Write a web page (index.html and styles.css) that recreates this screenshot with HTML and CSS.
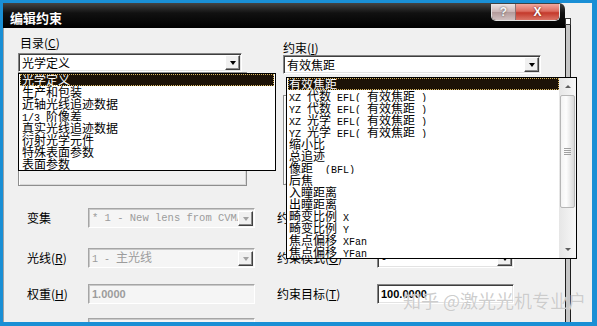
FILE: index.html
```html
<!DOCTYPE html>
<html lang="zh-CN">
<head>
  <meta charset="UTF-8">
  <title>编辑约束</title>
  <link rel="stylesheet" href="styles.css">
</head>
<body>
  <div class="window">

    <div class="dialog">
      <!-- Caption -->
      <div class="titlebar">
        <span class="title">编辑约束</span>
        <div class="caption-btns">
          <span class="cap-help">?</span>
          <span class="cap-close">X</span>
        </div>
      </div>

      <div class="content">
        <!-- Category / constraint pickers -->
        <div class="pickers">
          <div class="col-left">
            <div class="lbl">目录(<u>C</u>)</div>
            <div class="select cat"><span class="val">光学定义</span><span class="drop"></span></div>
            <div class="listbox cat-box"></div>
          </div>
          <div class="col-right">
            <div class="lbl">约束(<u>I</u>)</div>
            <div class="select con"><span class="val">有效焦距</span><span class="drop"></span></div>
            <div class="listbox con-box"></div>
          </div>
        </div>

        <!-- Field rows -->
        <div class="row r1">
          <span class="row-lbl">变集</span>
          <div class="select off field"><span class="val en wide">* 1 - New lens from CVMA</span><span class="drop"></span></div>
          <span class="row-lbl r">约束类型(<u>Y</u>)</span>
          <div class="select field r"><span class="val">-</span><span class="drop"></span></div>
        </div>
        <div class="row r2">
          <span class="row-lbl">光线(<u>R</u>)</span>
          <div class="select off field"><span class="val"><span class="en">1 - </span>主光线</span><span class="drop"></span></div>
          <span class="row-lbl r">约束模式(<u>O</u>)</span>
          <div class="select field r"><span class="val"><span class="en">-</span></span><span class="drop"></span></div>
        </div>
        <div class="row r3">
          <span class="row-lbl">权重(<u>H</u>)</span>
          <div class="input off field">1.0000</div>
          <span class="row-lbl r">约束目标(<u>T</u>)</span>
          <div class="input field r">100.0000</div>
        </div>
        <div class="row r4">
          <span class="row-lbl">变量</span>
          <div class="input off field"></div>
        </div>
      </div>
    </div>

    <!-- window behind the dialog -->
    <div class="side">
      <div class="knob"></div>
      <div class="rail"></div>
    </div>

    <!-- Open dropdown of 目录 -->
    <ul class="popup cat-pop">
      <li class="on">光学定义</li>
      <li>生产和包装</li>
      <li>近轴光线追迹数据</li>
      <li><span class="en">1/3 </span>阶像差</li>
      <li>真实光线追迹数据</li>
      <li>衍射光学元件</li>
      <li>特殊表面参数</li>
      <li>表面参数</li>
    </ul>

    <!-- Open dropdown of 约束 -->
    <div class="popup con-pop">
      <ul class="items">
        <li class="on">有效焦距</li>
        <li><span class="en">XZ </span>代数<span class="en"> EFL( </span>有效焦距<span class="en"> )</span></li>
        <li><span class="en">YZ </span>代数<span class="en"> EFL( </span>有效焦距<span class="en"> )</span></li>
        <li><span class="en">XZ </span>光学<span class="en"> EFL( </span>有效焦距<span class="en"> )</span></li>
        <li><span class="en">YZ </span>光学<span class="en"> EFL( </span>有效焦距<span class="en"> )</span></li>
        <li>缩小比</li>
        <li>总追迹</li>
        <li>像距<span class="en">  (BFL)</span></li>
        <li>后焦</li>
        <li>入瞳距离</li>
        <li>出瞳距离</li>
        <li>畸变比例<span class="en"> X</span></li>
        <li>畸变比例<span class="en"> Y</span></li>
        <li>焦点偏移<span class="en"> XFan</span></li>
        <li>焦点偏移<span class="en"> YFan</span></li>
      </ul>
      <div class="vscroll">
        <span class="sb-btn sb-up"></span>
        <span class="sb-thumb"></span>
        <span class="sb-track"></span>
        <span class="sb-btn sb-down"></span>
      </div>
    </div>

    <div class="watermark">知乎 @激光光机专业户</div>
  </div>
</body>
</html>
```

FILE: styles.css
```css
:root {
  --desk: #1a8fd5;
  --face: #f0f0f0;
  --ink: #000;
  --muted: #9c9c9c;
  --pick: #1c1207;
  --cjk: "Noto Sans CJK SC", "Noto Sans", sans-serif;
  --mono: "Liberation Mono", "DejaVu Sans Mono", monospace;
  --sans: "Liberation Sans", Arial, sans-serif;
}

* {
  box-sizing: border-box;
  margin: 0;
  padding: 0;
}

html,
body {
  width: 597px;
  height: 326px;
  overflow: hidden;
}

body {
  background: var(--desk);
  padding: 3px 5px 4px 3px;
  font: 12px/12px var(--cjk);
  color: var(--ink);
}

.window {
  position: relative;
  display: flex;
  height: 100%;
  background: var(--face);
  overflow: hidden;
}

/* Dialog */
.dialog {
  width: 562px;
  display: flex;
  flex-direction: column;
}

.titlebar {
  height: 25px;
  flex: none;
  display: flex;
  justify-content: space-between;
  align-items: flex-start;
  padding: 0 5px 0 7px;
  background: linear-gradient(#444, #111 40%, #000);
  border-top-right-radius: 6px;
}

.title {
  margin-top: 8px;
  color: #fff;
  font-weight: bold;
  font-size: 13px;
  line-height: 13px;
}

.caption-btns {
  display: flex;
  margin-top: 1px;
  height: 17px;
  border: 1px solid #e2e2e2;
  border-top: none;
  border-radius: 0 0 5px 5px;
  overflow: hidden;
}

.cap-help,
.cap-close {
  display: flex;
  align-items: center;
  justify-content: center;
  font: bold 12px var(--sans);
  color: #fff;
}

.cap-help {
  width: 24px;
  background: linear-gradient(#eee4e4, #cbb6b6 48%, #b39a9a 52%, #d0c0c0);
  border-right: 1px solid #8d7272;
  color: #f4f4f4;
  text-shadow: 0 0 2px #444;
}

.cap-close {
  width: 43px;
  background: linear-gradient(#f2a89e, #dc6d60 45%, #c4392b 55%, #da7466);
  text-shadow: 0 0 2px #5a0d05;
}

.content {
  flex: 1;
  box-shadow: inset 1px 0 #a3a3a3;
}

.pickers {
  display: flex;
  align-items: flex-start;
  padding-left: 15px;
}

.col-left {
  width: 265px;
}

.col-right {
  flex: 1;
}

.lbl {
  height: 12px;
  white-space: nowrap;
}

.col-left .lbl {
  margin: 9px 0 4px 2px;
}

.col-right .lbl {
  margin: 14px 0 1px;
}

/* Combo boxes and edits */
.select,
.input {
  display: flex;
  align-items: center;
  height: 19px;
  padding: 0 1px 0 3px;
  background: #fff;
  border: 1px solid;
  border-color: #858585 #fff #fff #858585;
  box-shadow: inset 1px 1px #3e3e3e, inset -1px -1px #e3e3e3;
  white-space: nowrap;
}

.select .val {
  flex: 1;
  overflow: hidden;
}

.drop {
  flex: none;
  width: 15px;
  height: 15px;
  display: flex;
  align-items: center;
  justify-content: center;
  background: var(--face);
  border: 1px solid;
  border-color: #fff #404040 #404040 #fff;
  box-shadow: inset -1px -1px #8a8a8a;
}

.drop::after {
  content: "";
  border-left: 3px solid transparent;
  border-right: 3px solid transparent;
  border-top: 4px solid #000;
  margin-top: 1px;
}

.select.cat {
  width: 224px;
}

.select.con {
  width: 258px;
}

.off {
  color: var(--muted);
  background: #f5f5f5;
  border-color: #a5a5a5 #fff #fff #a5a5a5;
  box-shadow: inset 1px 1px #c9c9c9;
}

.off .drop::after {
  border-top-color: #a2a2a2;
}

.listbox {
  background: var(--face);
  border: 1px solid #8e8e8e;
  box-shadow: inset 1px 1px #fff, inset -1px -1px #d8d8d8;
}

.cat-box {
  width: 229px;
  height: 114px;
}

.con-box {
  width: 264px;
  height: 90px;
  margin-top: 21px;
}

/* Rows under the pickers */
.row {
  display: flex;
  align-items: center;
  height: 20px;
  padding-left: 24px;
}

.r1 { margin-top: 22px; }
.r2 { margin-top: 20px; }
.r3 { margin-top: 16px; }
.r4 { margin-top: 14px; }

.row-lbl {
  width: 61px;
  white-space: nowrap;
}

.row-lbl.r {
  width: 100px;
  margin-left: 22px;
}

.row .field {
  width: 167px;
  height: 20px;
}

.row .field.r {
  width: 137px;
}

.input {
  font: bold 11px var(--sans);
  padding-left: 3px;
}

.en {
  font-family: var(--mono);
  font-size: 10px;
  white-space: pre;
}

.en.wide {
  font-size: 10.5px;
}

/* Window behind, at the right */
.side {
  flex: 1;
  display: flex;
  flex-direction: column;
  padding-top: 15px;
}

.knob {
  width: 6px;
  height: 7px;
  border: 1px solid #3a3a3a;
  background: #fff;
}

.rail {
  flex: 1;
  width: 6px;
  border-left: 1px solid #1e1e1e;
  border-right: 1px solid #1e1e1e;
  background: #c6c6c6;
}

/* Dropdown lists */
.popup {
  position: absolute;
  background: #fff;
  border: 1px solid #000;
  list-style: none;
}

.popup li {
  list-style: none;
  height: 12px;
  line-height: 12px;
  white-space: nowrap;
  overflow: hidden;
}

.popup li.on {
  background: var(--pick);
  color: #fff;
  outline: 1px dotted #d9b862;
  outline-offset: -1px;
}

.cat-pop {
  left: 15px;
  top: 70px;
  width: 258px;
  height: 98px;
  padding: 0 1px;
}

.cat-pop li {
  padding-left: 2px;
}

.con-pop {
  left: 283px;
  top: 74px;
  width: 291px;
  height: 182px;
  display: flex;
}

.items {
  flex: 1;
  padding-left: 1px;
}

.items li {
  padding-left: 1px;
}

.vscroll {
  width: 17px;
  display: flex;
  flex-direction: column;
  background: linear-gradient(90deg, #e6e6e6, #f7f7f7);
}

.sb-btn {
  height: 17px;
  display: flex;
  align-items: center;
  justify-content: center;
}

.sb-btn::after {
  content: "";
  border-left: 3px solid transparent;
  border-right: 3px solid transparent;
}

.sb-up::after {
  border-bottom: 3px solid #5e5e5e;
}

.sb-down::after {
  border-top: 3px solid #5e5e5e;
}

.sb-thumb {
  height: 113px;
  margin: 0 1px;
  display: flex;
  align-items: center;
  justify-content: center;
  border: 1px solid #b6b6b6;
  border-radius: 2px;
  background: linear-gradient(90deg, #f3f3f3, #fdfdfd 40%, #d9d9d9);
}

.sb-thumb::after {
  content: "";
  width: 7px;
  height: 7px;
  background: repeating-linear-gradient(#a0a0a0 0 1px, transparent 1px 2px);
}

.sb-track {
  flex: 1;
}

.watermark {
  position: absolute;
  left: 400px;
  top: 287px;
  font-size: 18px;
  line-height: 20px;
  color: rgba(196, 196, 196, 0.85);
  text-shadow: 0 0 1px rgba(255, 255, 255, 0.9);
  white-space: nowrap;
}
```
